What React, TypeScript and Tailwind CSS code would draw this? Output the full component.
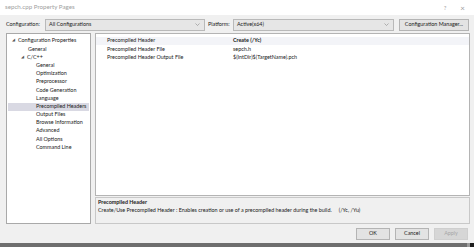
const treeChildren = [
  "General",
  "Optimization",
  "Preprocessor",
  "Code Generation",
  "Language",
  "Precompiled Headers",
  "Output Files",
  "Browse Information",
  "Advanced",
  "All Options",
  "Command Line",
];

const props: { name: string; value: string; bold?: boolean }[] = [
  { name: "Precompiled Header", value: "Create (/Yc)", bold: true },
  { name: "Precompiled Header File", value: "sepch.h" },
  { name: "Precompiled Header Output File", value: "$(IntDir)$(TargetName).pch" },
];

function Combo({ text, width }: { text: string; width: string }) {
  return (
    <div
      className={`${width} shrink-0 h-[12px] flex items-center justify-between border border-[#b9b9b9] bg-[#e6e6e6] pl-[3px] pr-[4px]`}
    >
      <span className="whitespace-nowrap">{text}</span>
      <svg width="5" height="3" viewBox="0 0 5 3">
        <path d="M0.5 0.5 L2.5 2.5 L4.5 0.5" fill="none" stroke="#888" strokeWidth="0.6" />
      </svg>
    </div>
  );
}

function Btn({ label, disabled }: { label: string; disabled?: boolean }) {
  return (
    <div
      className={`w-[34px] h-[12px] flex items-center justify-center border ${
        disabled
          ? "border-[#cfcfcf] bg-[#d6d6d6] text-[#a6a6a6]"
          : "border-[#b4b4b4] bg-[#e3e3e3] text-[#222]"
      }`}
    >
      {label}
    </div>
  );
}

export default function App() {
  return (
    <div
      className="w-[474px] h-[247px] flex flex-col bg-[#f0f0f0] text-[5.4px] leading-none text-[#1a1a1a] overflow-hidden whitespace-nowrap"
      style={{ fontFamily: "Lato, 'Noto Sans', sans-serif" }}
    >
      {/* title bar */}
      <div className="h-[15px] bg-white flex items-center justify-between pl-[5px] pr-[9px] text-[#a0a0a0]">
        <span className="text-[6.2px]">sepch.cpp Property Pages</span>
        <div className="flex items-center gap-[14px] text-[6px]">
          <span>?</span>
          <span className="text-[8px]">×</span>
        </div>
      </div>

      {/* configuration row */}
      <div className="mt-[3px] h-[13px] flex items-center pl-[6px]">
        <span className="w-[39px] shrink-0">Configuration:</span>
        <Combo text="All Configurations" width="w-[160px]" />
        <span className="ml-[3px] w-[25px] shrink-0">Platform:</span>
        <Combo text="Active(x64)" width="w-[161px]" />
        <div className="ml-[5px] w-[70px] shrink-0 h-[12px] flex items-center justify-center border border-[#b4b4b4] bg-[#e3e3e3]">
          Configuration Manager...
        </div>
      </div>

      {/* main area */}
      <div className="mt-[2px] h-[191px] flex pl-[6px]">
        <div className="w-[85px] shrink-0 h-full border border-[#a9a9a9] bg-white pt-[3px] pl-[1px] pr-[1px]">
          <div className="h-[8.2px] flex items-center pl-[4px]">
            <span className="text-[3.5px] text-[#555] mr-[3px]">◢</span>
            Configuration Properties
          </div>
          <div className="h-[8.2px] flex items-center pl-[20px]">General</div>
          <div className="h-[8.2px] flex items-center pl-[13px]">
            <span className="text-[3.5px] text-[#555] mr-[3px]">◢</span>
            C/C++
          </div>
          {treeChildren.map((c) => (
            <div
              key={c}
              className={`h-[8.2px] flex items-center pl-[28px] ${
                c === "Precompiled Headers" ? "bg-[#d9d9e3]" : ""
              }`}
            >
              {c}
            </div>
          ))}
        </div>

        <div className="ml-[4px] w-[375px] shrink-0 h-full flex flex-col">
          <div className="h-[163px] border border-[#b4b4b4] bg-white pt-[3px]">
            {props.map((p, i) => (
              <div
                key={p.name}
                className={`h-[8.3px] flex items-center pl-[11px] ${
                  i === 0 ? "bg-[#f3f4f8]" : ""
                }`}
              >
                <span className="w-[126px] shrink-0">{p.name}</span>
                <span className={p.bold ? "font-bold" : ""}>{p.value}</span>
              </div>
            ))}
          </div>
          <div className="mt-[1px] h-[27px] border border-[#c8c8c8] bg-[#f0f0f0] pl-[2px] pt-[2px] flex flex-col gap-[3px]">
            <span className="font-bold">Precompiled Header</span>
            <div className="flex">
              <span>
                Create/Use Precompiled Header : Enables creation or use of a precompiled header during
                the build.
              </span>
              <span className="ml-[7px]">(/Yc, /Yu)</span>
            </div>
          </div>
        </div>
      </div>

      {/* buttons */}
      <div className="mt-[4px] h-[12px] flex justify-end gap-[5px] pr-[6px]">
        <Btn label="OK" />
        <Btn label="Cancel" />
        <Btn label="Apply" disabled />
      </div>

      {/* bottom edge */}
      <div className="mt-auto h-[4px] flex bg-[#6e6e6e]">
        <div className="flex-1" />
        <div className="w-[3px] bg-[#9a9a9a]" />
        <div className="w-[4px] bg-[#1e1e1e]" />
      </div>
    </div>
  );
}
